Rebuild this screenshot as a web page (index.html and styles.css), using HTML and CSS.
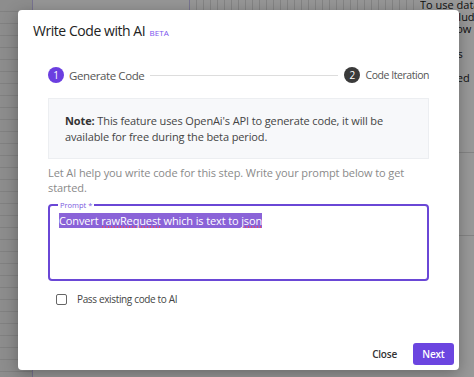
FILE: index.html
```html
<!DOCTYPE html>
<html lang="en">
<head>
  <meta charset="UTF-8" />
  <title>Write Code with AI</title>
  <link rel="stylesheet" href="styles.css">
</head>
<body>
  <div class="page">
    <div class="rail"></div>
    <div class="editor">
      <div class="editor-top"></div>
    </div>
    <div class="docs">
      <p>To use data<br>that includes<br>see below</p>
      <p>to access<br>outputs<br>connected</p>
      <p>use "c<br>code, if<br>to w</p>
      <p class="sep">first</p>
      <pre class="code">import
const
return</pre>
    </div>
  </div>

  <div class="backdrop"></div>

  <div class="modal">
    <h1 class="modal-title">Write Code with AI <span class="beta">BETA</span></h1>

    <div class="modal-body">
      <div class="stepper">
        <div class="step active"><span class="step-num">1</span>Generate Code</div>
        <div class="step-line"></div>
        <div class="step last"><span class="step-num">2</span>Code Iteration</div>
      </div>

      <div class="note">
        <strong>Note:</strong> This feature uses OpenAi's API to generate code, it will be available for free during the beta period.
      </div>

      <p class="helper">Let AI help you write code for this step. Write your prompt below to get started.</p>

      <fieldset class="prompt">
        <legend>Prompt *</legend>
        <div class="prompt-text"><span class="sel">Convert <u>rawRequest</u> which is text to <u>json</u></span></div>
      </fieldset>

      <label class="check">
        <span class="box"></span>
        Pass existing code to AI
      </label>
    </div>

    <div class="modal-footer">
      <button class="btn-text">Close</button>
      <button class="btn-primary">Next</button>
    </div>
  </div>
</body>
</html>
```

FILE: styles.css
```css
body {
  margin: 0;
  width: 474px;
  height: 377px;
  overflow: hidden;
  font-family: "Open Sans", "Noto Sans", sans-serif;
  position: relative;
  background: #f2f2f2;
}
.page {
  display: flex;
  height: 377px;
}
.rail {
  width: 32px;
  background: repeating-linear-gradient(#ececec 0 11px, #d8d8d8 11px 12px);
  border-right: 1px solid #c8c0f0;
}
.editor {
  flex: 1;
  background: #fafafa;
}
.editor-top {
  height: 10px;
  margin-left: 156px;
  border-left: 1px solid #c9c3f0;
  background: repeating-linear-gradient(90deg, #fafafa 0 6px, #dcdcdc 6px 7px);
}
.docs {
  width: 54px;
  background: #fff;
  font-size: 11px;
  line-height: 12px;
  color: #1a1a1a;
  overflow: hidden;
  white-space: nowrap;
}
.docs p {
  margin: -1px 0 13px;
}
.docs p:nth-child(2) {
  margin: 0 0 15px -4px;
}
.docs p:nth-child(3) {
  margin: 0 0 17px -6px;
}
.docs .sep {
  border-top: 1px solid #ddd;
  border-bottom: 1px solid #ddd;
  padding: 38px 0 32px;
  margin: 0 0 0 -12px;
}
.docs .code {
  margin: 99px 0 0 -2px;
  font-family: "DejaVu Sans Mono", monospace;
  font-size: 11px;
  line-height: 12px;
  color: #5a2a7a;
}
.backdrop {
  position: absolute;
  inset: 0;
  background: rgba(0, 0, 0, 0.4);
}
.modal {
  position: absolute;
  left: 18px;
  top: 10px;
  width: 441px;
  height: 360px;
  background: #fff;
  border-radius: 4px;
  box-shadow: 0 4px 16px rgba(0, 0, 0, 0.3);
  display: flex;
  flex-direction: column;
}
.modal-title {
  margin: 0;
  padding: 11px 15px 0;
  font-size: 14px;
  font-weight: 400;
  letter-spacing: -0.45px;
  line-height: 20px;
  color: #222;
}
.beta {
  font-size: 8px;
  letter-spacing: 0.1px;
  color: #7b55ee;
  margin-left: 1px;
}
.modal-body {
  padding: 0 30px;
  flex: 1;
}
.stepper {
  display: flex;
  align-items: center;
  margin-top: 22px;
  height: 20px;
}
.step {
  display: flex;
  align-items: center;
  font-size: 11.5px;
  letter-spacing: -0.4px;
  color: #555;
}
.step.last {
  font-size: 10.5px;
  letter-spacing: -0.45px;
}
.step-num {
  width: 16px;
  height: 16px;
  border-radius: 50%;
  background: #3a3a3a;
  color: #fff;
  font-size: 10px;
  letter-spacing: 0;
  display: flex;
  align-items: center;
  justify-content: center;
  margin-right: 5px;
}
.step.active .step-num {
  background: #6b3ee0;
}
.step-line {
  flex: 1;
  height: 1px;
  background: #ddd;
  margin: 0 6px;
}
.note {
  margin-top: 13px;
  height: 61px;
  box-sizing: border-box;
  padding: 14px 16px 0;
  background: #f7f8fa;
  border: 1px solid #eceef1;
  font-size: 11px;
  letter-spacing: -0.12px;
  line-height: 15.5px;
  color: #444;
}
.note strong {
  color: #333;
}
.helper {
  margin: 6px 0 0;
  font-size: 11px;
  letter-spacing: -0.1px;
  line-height: 15px;
  color: #8a8a8a;
}
.prompt {
  margin: 6px 0 0;
  padding: 0 9px;
  height: 80px;
  box-sizing: border-box;
  border: 2px solid #6a47d6;
  border-radius: 4px;
}
.prompt legend {
  font-size: 7.5px;
  color: #7b5ae0;
  padding: 0 2px;
  margin-left: -1px;
  line-height: 8px;
}
.prompt-text {
  font-size: 11px;
  letter-spacing: -0.13px;
  line-height: 15px;
  margin-top: 4px;
  color: #fff;
}
.sel {
  background: #8a63d8;
}
.sel u {
  text-decoration: none;
  background: radial-gradient(circle, #e04a70 0.7px, transparent 1px) left bottom / 3px 2px repeat-x;
}
.check {
  display: flex;
  align-items: center;
  margin: 11px 0 0 8px;
  font-size: 10px;
  letter-spacing: -0.35px;
  line-height: 14px;
  color: #444;
}
.box {
  width: 9px;
  height: 9px;
  border: 1.5px solid #666;
  border-radius: 2px;
  margin-right: 10px;
}
.modal-footer {
  display: flex;
  justify-content: flex-end;
  align-items: center;
  gap: 10px;
  padding: 0 5px 5px 0;
}
.btn-text {
  background: none;
  border: none;
  font-family: inherit;
  font-size: 10px;
  letter-spacing: -0.2px;
  font-weight: 600;
  color: #333;
  padding: 4px 6px;
}
.btn-primary {
  background: #6b45e0;
  color: #fff;
  border: none;
  border-radius: 3px;
  font-family: inherit;
  font-size: 10px;
  letter-spacing: -0.2px;
  font-weight: 600;
  width: 41px;
  height: 22px;
}
```
